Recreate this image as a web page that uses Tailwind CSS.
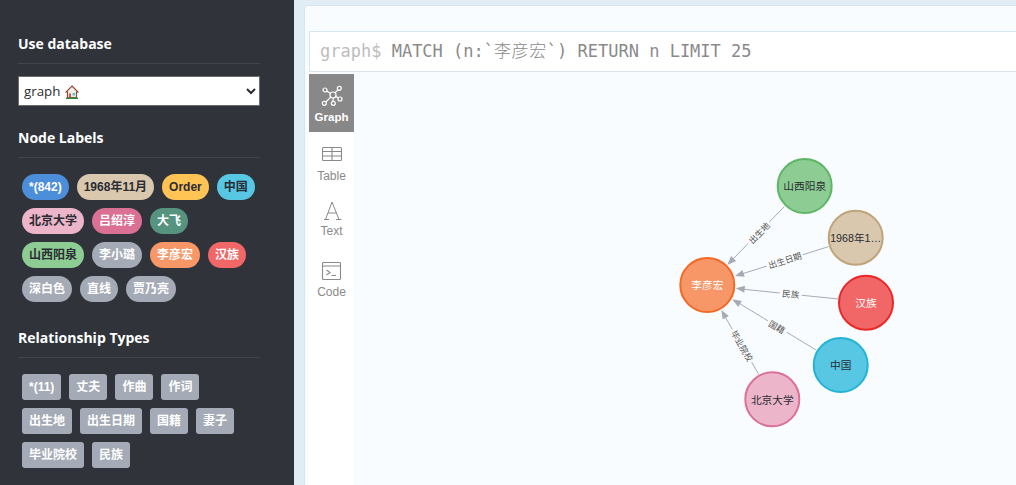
<!DOCTYPE html>
<html lang="en">
<head>
  <meta charset="UTF-8">
  <meta name="viewport" content="width=device-width, initial-scale=1.0">
  <title>Neo4j Browser</title>
  <script src="https://cdn.jsdelivr.net/npm/@tailwindcss/browser@4"></script>
</head>
<body class="flex h-[485px] w-[1016px] overflow-hidden bg-[#e2ecf5] font-['Liberation_Sans','Noto_Sans_CJK_SC',sans-serif]">

  <!-- sidebar -->
  <aside class="w-[294px] shrink-0 bg-[#30333a] pl-[18px] pr-[34px] pt-[34px] text-white">
    <h3 class="h-[30px] border-b border-[#41444b] font-['Open_Sans'] text-sm font-bold leading-[20px]">Use database</h3>
    <div class="relative mt-3">
      <select class="h-[30px] w-[242px] rounded-none border border-[#6b6b6b] bg-white pl-[1px] font-['Open_Sans'] text-[13.33px] text-[#2a2c34]">
        <option>graph</option>
      </select>
      <svg class="absolute left-[47px] top-[9px]" width="14" height="14" viewBox="0 0 14 14">
        <path d="M7 1 L13 7 H11.5 V12.5 H2.5 V7 H1 Z" fill="#f3efe6" stroke="#8a4a3c" stroke-width="1.2"/>
        <rect x="1" y="12.5" width="12" height="1.5" fill="#2e8b3a"/>
        <rect x="4" y="8.5" width="2" height="4" fill="#d9534f"/>
        <rect x="7.5" y="8" width="2.5" height="2.5" fill="#5bbfe0"/>
      </svg>
    </div>

    <h3 class="mt-[22px] h-[30px] border-b border-[#41444b] font-['Open_Sans'] text-sm font-bold leading-[20px]">Node Labels</h3>
    <div class="mt-4 flex w-[238px] flex-wrap gap-x-2 gap-y-2 pl-1 text-xs font-bold leading-[26px]">
      <span class="h-[26px] rounded-full bg-[#4c8eda] px-[7px] text-white">*(842)</span>
      <span class="h-[26px] rounded-full bg-[#d9c8ae] px-[7px] text-[#2a2c34]">1968年11月</span>
      <span class="h-[26px] rounded-full bg-[#ffc454] px-[7px] text-[#2a2c34]">Order</span>
      <span class="h-[26px] rounded-full bg-[#57c7e3] px-[7px] text-[#2a2c34]">中国</span>
      <span class="h-[26px] rounded-full bg-[#ecb5c9] px-[7px] text-[#2a2c34]">北京大学</span>
      <span class="h-[26px] rounded-full bg-[#da7194] px-[7px] text-white">吕绍淳</span>
      <span class="h-[26px] rounded-full bg-[#569480] px-[7px] text-white">大飞</span>
      <span class="h-[26px] rounded-full bg-[#8dcc93] px-[7px] text-[#2a2c34]">山西阳泉</span>
      <span class="h-[26px] rounded-full bg-[#a5abb6] px-[7px] text-white">李小璐</span>
      <span class="h-[26px] rounded-full bg-[#f79767] px-[7px] text-white">李彦宏</span>
      <span class="h-[26px] rounded-full bg-[#f16667] px-[7px] text-white">汉族</span>
      <span class="h-[26px] rounded-full bg-[#a5abb6] px-[7px] text-white">深白色</span>
      <span class="h-[26px] rounded-full bg-[#a5abb6] px-[7px] text-white">直线</span>
      <span class="h-[26px] rounded-full bg-[#a5abb6] px-[7px] text-white">贾乃亮</span>
    </div>

    <h3 class="mt-[26px] h-[30px] border-b border-[#41444b] font-['Open_Sans'] text-sm font-bold leading-[20px]">Relationship Types</h3>
    <div class="mt-4 flex w-[238px] flex-wrap gap-x-2 gap-y-2 pl-1 text-xs font-bold leading-[26px] text-white">
      <span class="h-[26px] rounded-[3px] bg-[#a5abb6] px-[7px]">*(11)</span>
      <span class="h-[26px] rounded-[3px] bg-[#a5abb6] px-[7px]">丈夫</span>
      <span class="h-[26px] rounded-[3px] bg-[#a5abb6] px-[7px]">作曲</span>
      <span class="h-[26px] rounded-[3px] bg-[#a5abb6] px-[7px]">作词</span>
      <span class="h-[26px] rounded-[3px] bg-[#a5abb6] px-[7px]">出生地</span>
      <span class="h-[26px] rounded-[3px] bg-[#a5abb6] px-[7px]">出生日期</span>
      <span class="h-[26px] rounded-[3px] bg-[#a5abb6] px-[7px]">国籍</span>
      <span class="h-[26px] rounded-[3px] bg-[#a5abb6] px-[7px]">妻子</span>
      <span class="h-[26px] rounded-[3px] bg-[#a5abb6] px-[7px]">毕业院校</span>
      <span class="h-[26px] rounded-[3px] bg-[#a5abb6] px-[7px]">民族</span>
    </div>
  </aside>

  <!-- result frame -->
  <main class="flex min-w-0 flex-1 flex-col pl-[10px] pt-[5px]">
    <div class="flex flex-1 flex-col rounded-tl-sm border-l border-t border-[#d8e4ef] bg-[#f9fcff] pl-[4px] pt-[25px]">
      <div class="h-[41px] shrink-0 border-y border-l border-[#d8e4ef] bg-white pl-[10px] font-['DejaVu_Sans_Mono','Noto_Sans_CJK_SC',monospace] text-[17px] leading-[38px] text-[#8a8a8a] whitespace-pre"><span class="text-[#bdbdbd]">graph$</span> MATCH (n:`<span class="font-light tracking-[0.6px]">李彦宏</span>`) RETURN n LIMIT 25</div>

      <div class="mt-[2px] flex min-h-0 flex-1">
        <!-- view tabs -->
        <nav class="flex w-[45px] shrink-0 flex-col bg-white text-xs text-[#8a8a8a]">
          <div class="flex h-[58px] flex-col items-center bg-[#888888] pt-[9px] text-white">
            <svg width="24" height="24" viewBox="0 0 24 24" fill="none" stroke="white" stroke-width="1.2">
              <circle cx="13" cy="12" r="3"/>
              <circle cx="5" cy="7" r="2"/><circle cx="19.3" cy="5.3" r="2"/>
              <circle cx="20" cy="16" r="2"/><circle cx="13.3" cy="20.3" r="2"/><circle cx="4.3" cy="20.3" r="2"/>
              <path d="M6.7 8 L10.5 10.4 M17.9 6.8 L15 9.8 M18.1 15.3 L15.9 13 M13.1 15 L13.2 18.3 M10.8 14.1 L5.8 19"/>
            </svg>
            <span class="mt-[2px] text-[11.5px] font-bold leading-[16px]">Graph</span>
          </div>
          <div class="flex h-[56px] flex-col items-center pt-[14px]">
            <svg width="22" height="16" viewBox="0 0 22 16" fill="none" stroke="#8a8a8a" stroke-width="1.1">
              <rect x="1.5" y="1.5" width="19" height="13" rx="1"/>
              <path d="M1.5 5.5 H20.5 M1.5 10 H20.5 M11 1.5 V14.5"/>
            </svg>
            <span class="mt-[6px] leading-[16px]">Table</span>
          </div>
          <div class="flex h-[56px] flex-col items-center pt-[12px]">
            <svg width="24" height="24" viewBox="0 0 24 24" fill="none" stroke="#8a8a8a" stroke-width="1">
              <path d="M5.5 19.5 L12 2 L19 19.5 M8 13 H16.5 M4 19.5 H9 M16 19.5 H21.5"/>
            </svg>
            <span class="mt-[1px] leading-[12px]">Text</span>
          </div>
          <div class="flex h-[60px] flex-col items-center pt-[17px]">
            <svg width="22" height="20" viewBox="0 0 22 20" fill="none" stroke="#8a8a8a" stroke-width="1.1">
              <rect x="1.5" y="1.5" width="18" height="17" rx="1"/>
              <path d="M1.5 5 H19.5 M5.5 9 L9 11.5 L5.5 14 M10.5 14.5 H15"/>
            </svg>
            <span class="mt-[3px] leading-[16px]">Code</span>
          </div>
        </nav>

        <!-- graph canvas -->
        <div class="min-w-0 flex-1">
          <svg width="662" height="411" viewBox="354 74 662 411" font-family="'Liberation Sans','Noto Sans CJK SC',sans-serif">
            <g stroke="#a5abb6" stroke-width="1" fill="#a5abb6">
              <line x1="784.3" y1="206.7" x2="732" y2="260"/>
              <line x1="828.3" y1="246.7" x2="740" y2="274.5"/>
              <line x1="838.3" y1="299" x2="741" y2="289"/>
              <line x1="816" y1="350" x2="737" y2="302"/>
              <line x1="758.7" y1="374.3" x2="724" y2="315"/>
              <polygon stroke="none" points="0,0 9,-3.5 9,3.5" transform="translate(727.3 265) rotate(-45.7)"/>
              <polygon stroke="none" points="0,0 9,-3.5 9,3.5" transform="translate(735 276) rotate(-17.5)"/>
              <polygon stroke="none" points="0,0 9,-3.5 9,3.5" transform="translate(735.7 288.3) rotate(5.9)"/>
              <polygon stroke="none" points="0,0 9,-3.5 9,3.5" transform="translate(732.3 299.3) rotate(31)"/>
              <polygon stroke="none" points="0,0 9,-3.5 9,3.5" transform="translate(721.3 310) rotate(59.8)"/>
            </g>
            <g font-size="8.6" fill="#555555" text-anchor="middle">
              <g transform="translate(759.3 233.3) rotate(-45.7)"><rect x="-15" y="-5" width="30" height="10" fill="#f9fcff"/><text y="3">出生地</text></g>
              <g transform="translate(785 260.7) rotate(-17.5)"><rect x="-19" y="-5" width="38" height="10" fill="#f9fcff"/><text y="3">出生日期</text></g>
              <g transform="translate(790.7 294.3) rotate(5.9)"><rect x="-11" y="-5" width="22" height="10" fill="#f9fcff"/><text y="3">民族</text></g>
              <g transform="translate(776.7 327.3) rotate(31)"><rect x="-11" y="-5" width="22" height="10" fill="#f9fcff"/><text y="3">国籍</text></g>
              <g transform="translate(741.7 346) rotate(59.8)"><rect x="-19" y="-5" width="38" height="10" fill="#f9fcff"/><text y="3">毕业院校</text></g>
            </g>
            <g stroke-width="2" font-size="10.7" text-anchor="middle">
              <circle cx="707.3" cy="285" r="27" fill="#f79767" stroke="#f36924"/>
              <circle cx="804.7" cy="186" r="27" fill="#8dcc93" stroke="#5db665"/>
              <circle cx="855.7" cy="237.7" r="27" fill="#d9c8ae" stroke="#c0a378"/>
              <circle cx="866" cy="302.7" r="27" fill="#f16667" stroke="#eb2728"/>
              <circle cx="840.7" cy="365" r="27" fill="#57c7e3" stroke="#23b3d7"/>
              <circle cx="772.3" cy="399.3" r="27" fill="#ecb5c9" stroke="#da7298"/>
              <text x="707.3" y="289" fill="#ffffff">李彦宏</text>
              <text x="804.7" y="190" fill="#2a2c34">山西阳泉</text>
              <text x="855.7" y="242" fill="#2a2c34">1968年1…</text>
              <text x="866" y="307" fill="#ffffff">汉族</text>
              <text x="840.7" y="369" fill="#2a2c34">中国</text>
              <text x="772.3" y="404" fill="#2a2c34">北京大学</text>
            </g>
          </svg>
        </div>
      </div>
    </div>
  </main>
</body>
</html>
